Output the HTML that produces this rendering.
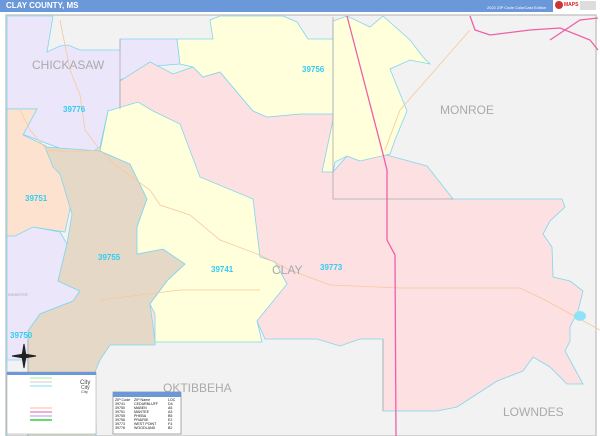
<!DOCTYPE html>
<html><head><meta charset="utf-8">
<style>
html,body{margin:0;padding:0;background:#fff;}
body{width:600px;height:436px;overflow:hidden;position:relative;font-family:"Liberation Sans",sans-serif;}
#hdr{position:absolute;left:0;top:0;width:553px;height:12px;background:#6b98d8;}
#hdr .t{position:absolute;left:6px;top:1px;color:#fff;font-weight:bold;font-size:8px;}
#hdr .s{position:absolute;left:487px;top:5px;color:#fff;font-size:4px;}
#logo{position:absolute;left:554px;top:0;width:44px;height:12px;background:#fff;}
svg{position:absolute;left:0;top:0;}
</style></head><body>
<div id="hdr"><span class="t">CLAY COUNTY, MS</span><span class="s">2022 ZIP Code ColorCast Edition</span></div>
<div id="logo">
<div style="position:absolute;left:1px;top:1px;width:8px;height:8px;border-radius:50%;background:#c33"></div>
<div style="position:absolute;left:10px;top:2px;font-size:5px;color:#d22;font-weight:bold">MAPS</div>
<div style="position:absolute;left:26px;top:1px;width:16px;height:9px;background:#ddd"></div>
</div>
<svg width="600" height="436" viewBox="0 0 600 436">
<rect x="6" y="15" width="590" height="421" fill="#f2f2f2" stroke="#c8c8c8" stroke-width="1.5"/>
<g stroke="#7fd6ee" stroke-width="0.8">
<!-- purple big left -->
<polygon fill="#ece6fb" points="7,16 53,16 47,52 60,46 68,45 80,50 120,50 120,39 177,39 180,64 155,66 120,80 120,109 108,111 100,147 83,157 22,134 37,109 7,109 7,436 7,436"/>
<polygon fill="#ece6fb" points="7,230 33,227 60,232 67,244 58,281 80,291 73,301 40,314 28,331 28,360 7,360"/>
<!-- orange -->
<polygon fill="#fde3cf" points="7,109 37,109 23,135 46,146 53,167 62,165 72,200 65,232 33,227 15,236 7,236"/>
<!-- brown -->
<polygon fill="#e6d8c7" points="45,147 100,151 130,164 147,199 137,227 137,254 163,249 185,264 167,281 150,304 155,314 155,345 110,345 100,360 95,372 96,436 28,436 28,331 40,314 73,301 80,291 58,281 67,244 72,214 60,174 53,167"/>
<!-- pink big -->
<polygon fill="#fde0e2" points="120,81 150,62 173,74 193,67 203,77 220,72 253,111 267,117 300,114 333,114 333,172 347,156 360,161 383,154 427,166 453,199 562,199 565,207 550,221 543,234 552,247 553,277 570,281 583,291 578,311 570,327 570,341 565,351 583,384 567,384 550,367 533,357 523,371 497,381 477,394 457,407 437,411 383,411 383,339 360,339 340,346 317,339 265,339 257,321 260,341 155,341 150,304 167,281 185,264 163,249 137,254 137,227 147,199 130,164 100,151 108,111 120,109"/>
<!-- yellow 39741 -->
<polygon fill="#ffffdc" points="108,111 138,102 153,111 180,124 200,177 253,199 260,257 275,262 287,284 257,321 262,342 155,342 155,314 150,304 167,281 185,264 163,249 137,254 137,227 147,199 130,164 100,151"/>
<!-- yellow 39756 -->
<polygon fill="#ffffdc" points="177,39 213,39 210,20 220,16 283,16 297,22 308,39 333,39 333,114 300,114 267,117 253,111 220,72 203,77 193,67 180,64"/>
<polygon fill="#ffffdc" points="333,21 347,16 370,27 383,16 410,40 423,57 430,64 410,60 390,69 407,111 395,140 390,154 360,161 347,156 335,162 333,172 322,172 333,120"/>
</g>
<!-- county boundary lines gray -->
<g stroke="#aaa" stroke-width="0.8" fill="none">
<polyline points="120,39 120,109"/>
<polyline points="333,17 333,199 453,199"/>
<polyline points="383,339 383,411"/>
<polyline points="28,340 28,436"/>
</g>
<!-- roads -->
<g stroke="#f7c89a" stroke-width="0.8" fill="none">
<polyline points="20,110 30,130 47,150 70,152 100,150 115,165 150,190 160,205 190,215 220,240 260,255 290,270 330,285 400,288 520,288 545,300 600,330"/>
<polyline points="60,20 70,70 80,95 85,130 100,150"/>
<polyline points="470,30 400,110 385,150"/>
<polyline points="100,300 180,290 260,290"/>
</g>
<g stroke="#ef5fa7" stroke-width="1.3" fill="none">
<polyline points="347,16 383,154 387,170 387,240 395,255 396,436"/>
<polyline points="470,16 475,30 490,35 530,30 560,28 590,40 598,50"/>
<polyline points="550,40 580,20 598,18"/>
</g>
<ellipse cx="580" cy="316" rx="6" ry="5" fill="#8fe3f8"/>
<g font-family="Liberation Sans, sans-serif" fill="#aaa" font-size="12">
<text x="32" y="69">CHICKASAW</text>
<text x="440" y="114">MONROE</text>
<text x="272" y="274">CLAY</text>
<text x="163" y="392">OKTIBBEHA</text>
<text x="503" y="416">LOWNDES</text>
<text x="8" y="296" font-size="4">WEBSTER</text>
</g>
<g font-family="Liberation Sans, sans-serif" fill="#33ccf2" font-size="8" font-weight="bold">
<text x="302" y="72">39756</text>
<text x="63" y="112">39776</text>
<text x="25" y="201">39751</text>
<text x="98" y="260">39755</text>
<text x="211" y="272">39741</text>
<text x="320" y="270">39773</text>
<text x="10" y="338">39750</text>
</g>
<!-- compass -->
<g stroke="#222" stroke-width="1" fill="#222">
<polygon points="24,344 26,356 24,368 22,356"/>
<polygon points="12,356 24,354 36,356 24,358"/>
</g>
<!-- legend -->
<rect x="7" y="372" width="89" height="62" fill="#fff" stroke="#999" stroke-width="0.5"/>
<rect x="7" y="372" width="89" height="3" fill="#6b98d8"/>
<g stroke-width="1" fill="none">
<line x1="30" y1="378" x2="52" y2="378" stroke="#9e9"/>
<line x1="30" y1="382" x2="52" y2="382" stroke="#ccc"/>
<line x1="30" y1="386" x2="52" y2="386" stroke="#8de"/>
<line x1="30" y1="408" x2="52" y2="408" stroke="#fb9"/>
<line x1="30" y1="412" x2="52" y2="412" stroke="#e5a"/>
<line x1="30" y1="416" x2="52" y2="416" stroke="#a9e"/>
<line x1="30" y1="420" x2="52" y2="420" stroke="#6d6" stroke-width="2"/>
</g>
<text x="80" y="384" font-size="6" fill="#444" font-family="Liberation Sans">City</text>
<text x="81" y="389" font-size="5" fill="#444" font-family="Liberation Sans">City</text>
<text x="81" y="393" font-size="4" fill="#444" font-family="Liberation Sans">City</text>
<!-- table -->
<rect x="113" y="392" width="68" height="42" fill="#fff" stroke="#888" stroke-width="0.7"/>
<rect x="113" y="392" width="68" height="5" fill="#6b98d8"/>
<g font-family="Liberation Sans, sans-serif" font-size="3.6" fill="#111">
<text x="115" y="401">ZIP Code</text><text x="134" y="401">ZIP Name</text><text x="168" y="401">LOC</text>
<text x="115" y="405">39741</text><text x="134" y="405">CEDARBLUFF</text><text x="168" y="405">D4</text>
<text x="115" y="409">39750</text><text x="134" y="409">MABEN</text><text x="168" y="409">A5</text>
<text x="115" y="413">39751</text><text x="134" y="413">MANTEE</text><text x="168" y="413">A3</text>
<text x="115" y="417">39755</text><text x="134" y="417">PHEBA</text><text x="168" y="417">B5</text>
<text x="115" y="421">39756</text><text x="134" y="421">PRAIRIE</text><text x="168" y="421">E2</text>
<text x="115" y="425">39773</text><text x="134" y="425">WEST POINT</text><text x="168" y="425">F4</text>
<text x="115" y="429">39776</text><text x="134" y="429">WOODLAND</text><text x="168" y="429">B2</text>
</g>
</svg>
</body></html>
